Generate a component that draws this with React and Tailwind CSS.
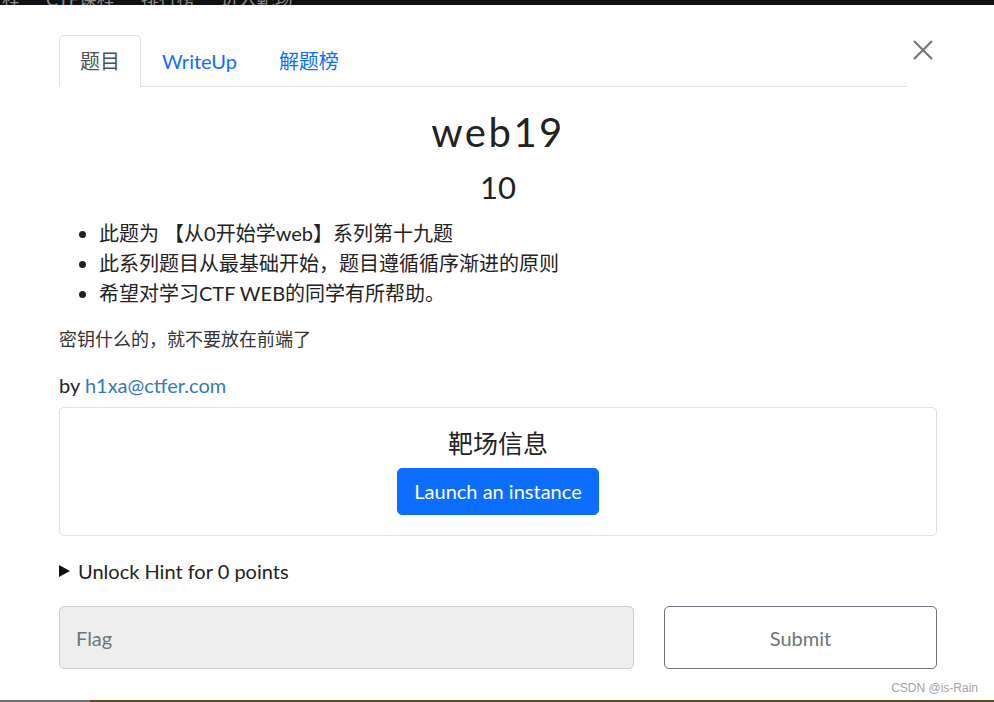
import React from 'react';

const tabs = [
  { label: '题目', active: true },
  { label: 'WriteUp' },
  { label: '解题榜' },
];

const points = [
  '此题为 【从0开始学web】系列第十九题',
  '此系列题目从最基础开始，题目遵循循序渐进的原则',
  '希望对学习CTF WEB的同学有所帮助。',
];

export default function App() {
  return (
    <div className="relative flex h-[702px] w-[994px] flex-col overflow-hidden bg-white font-['Lato','Noto_Sans_CJK_SC',sans-serif] text-[#212529]">
      {/* page behind the modal, mostly hidden */}
      <div className="h-[5px] shrink-0 overflow-hidden bg-[#111113]">
        <div className="-mt-[14px] flex gap-[26px] whitespace-nowrap pl-[2px] text-[18px] text-[#8a8a8a]">
          <span>程</span>
          <span>CTF课程</span>
          <span>排行榜</span>
          <span>进入靶场</span>
        </div>
      </div>

      {/* modal */}
      <div className="flex-1 pl-[59px] pr-[57px] pt-[30px]">
        {/* tabs + close */}
        <div className="flex items-start">
          <ul className="flex flex-1 border-b border-[#dee2e6]">
            {tabs.map((t) => (
              <li key={t.label} className="-mb-px">
                <span
                  className={`block rounded-t-[5px] border px-5 py-[10px] text-[20px] leading-[30px] ${
                    t.active
                      ? 'border-[#dee2e6] border-b-white bg-white text-[#495057]'
                      : 'border-transparent text-[#0d6efd]'
                  }`}
                >
                  {t.label}
                </span>
              </li>
            ))}
          </ul>
          <button className="ml-[6px] mt-[5px] flex h-[20px] w-[20px] items-center justify-center">
            <svg width="20" height="20" viewBox="0 0 20 20" fill="none" stroke="#777" strokeWidth="2.2">
              <path d="M1 1L19 19M19 1L1 19" />
            </svg>
          </button>
          <div className="w-[4px]" />
        </div>

        {/* challenge */}
        <h1 className="mt-[21px] text-center text-[40px] leading-[48px] tracking-[2.5px] text-[#222]">web19</h1>
        <h4 className="mt-[13px] text-center text-[31px] leading-[36px] text-[#222]">10</h4>

        <ul className="mt-[13px] list-disc pl-[40px] text-[20px] leading-[30px] text-[#222]">
          {points.map((p) => (
            <li key={p}>{p}</li>
          ))}
        </ul>

        <p className="mt-[18px] text-[18px] leading-[27px] text-[#333]">密钥什么的，就不要放在前端了</p>

        <p className="mt-[17px] text-[20px] leading-[30px] text-[#222]">
          by <a className="text-[#337ab7]">h1xa@ctfer.com</a>
        </p>

        {/* instance card */}
        <div className="mt-[7px] flex flex-col items-center rounded-[5px] border border-[#dfdfdf] pb-[20px] pt-[19px]">
          <div className="text-[25px] leading-[32px] text-[#222]">靶场信息</div>
          <button className="mt-[9px] rounded-[5px] border border-[#0d6efd] bg-[#0d6efd] px-[16px] py-[7px] text-[20px] leading-[31px] text-white">
            Launch an instance
          </button>
        </div>

        {/* hint */}
        <div className="mt-[20px] flex items-center text-[20px] leading-[30px] text-[#222]">
          <svg width="11" height="12" viewBox="0 0 11 12" className="mr-[8px]">
            <path d="M0 0L11 6L0 12Z" fill="#111" />
          </svg>
          Unlock Hint for 0 points
        </div>

        {/* flag form */}
        <div className="mt-[20px] flex gap-[30px]">
          <div className="flex h-[63px] flex-1 items-center rounded-[5px] border border-[#ccc] bg-[#eeeeee] px-[16px] text-[20px] text-[#6c757d]">
            Flag
          </div>
          <button className="h-[63px] w-[273px] rounded-[5px] border border-[#6c757d] bg-white text-[20px] text-[#6c757d]">
            Submit
          </button>
        </div>
      </div>

      <div className="flex h-[2px] shrink-0">
        <div className="w-[90px] bg-[#6e6e6e]" />
        <div className="flex-1 bg-[#5b4a2c]" />
      </div>

      <div className="absolute bottom-[5px] right-[16px] font-['Liberation_Sans',sans-serif] text-[12px] text-[#a3a3a3]">
        CSDN @is-Rain
      </div>
    </div>
  );
}
